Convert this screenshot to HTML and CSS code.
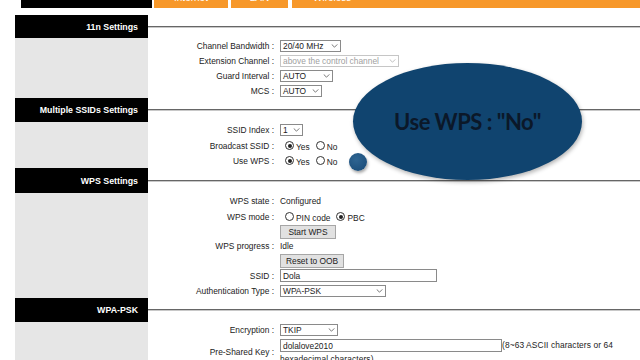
FILE: index.html
```html
<!DOCTYPE html>
<html lang="en">
<head>
  <meta charset="UTF-8">
  <title>Wireless Settings</title>
  <link rel="stylesheet" href="styles.css">
</head>
<body>
  <div class="topbar">
    <div class="top-black"></div>
    <div class="tab tab-internet"><span>Internet</span></div>
    <div class="tab tab-lan"><span>LAN</span></div>
    <div class="tab tab-wireless"><span>Wireless</span></div>
  </div>

  <div class="page">
    <!-- 11n -->
    <div class="head h-23"><div class="head-cell">11n Settings</div><div class="head-rule"></div></div>
    <div class="sec">
      <div class="side"></div>
      <div class="fields">
        <div class="row"><div class="lbl">Channel Bandwidth :</div><div class="ctl"><span class="sel w61">20/40 MHz<svg class="chev" viewBox="0 0 8 5"><path d="M0.5 0.5 L4 4 L7.5 0.5"/></svg></span></div></div>
        <div class="row"><div class="lbl">Extension Channel :</div><div class="ctl"><span class="sel w119 off">above the control channel<svg class="chev" viewBox="0 0 8 5"><path d="M0.5 0.5 L4 4 L7.5 0.5"/></svg></span></div></div>
        <div class="row"><div class="lbl">Guard Interval :</div><div class="ctl"><span class="sel w53">AUTO<svg class="chev" viewBox="0 0 8 5"><path d="M0.5 0.5 L4 4 L7.5 0.5"/></svg></span></div></div>
        <div class="row"><div class="lbl">MCS :</div><div class="ctl"><span class="sel w42">AUTO<svg class="chev" viewBox="0 0 8 5"><path d="M0.5 0.5 L4 4 L7.5 0.5"/></svg></span></div></div>
      </div>
    </div>

    <!-- Multiple SSIDs -->
    <div class="head h-24"><div class="head-cell">Multiple SSIDs Settings</div><div class="head-rule"></div></div>
    <div class="sec">
      <div class="side"></div>
      <div class="fields">
        <div class="row r16"><div class="lbl">SSID Index :</div><div class="ctl"><span class="sel w23">1<svg class="chev" viewBox="0 0 8 5"><path d="M0.5 0.5 L4 4 L7.5 0.5"/></svg></span></div></div>
        <div class="row"><div class="lbl">Broadcast SSID :</div><div class="ctl radios"><span class="radio on"></span><span class="opt">Yes</span><span class="radio"></span><span class="opt">No</span></div></div>
        <div class="row"><div class="lbl">Use WPS :</div><div class="ctl radios"><span class="radio on"></span><span class="opt">Yes</span><span class="radio"></span><span class="opt">No</span></div></div>
      </div>
    </div>

    <!-- WPS -->
    <div class="head h-25"><div class="head-cell">WPS Settings</div><div class="head-rule"></div></div>
    <div class="sec">
      <div class="side"></div>
      <div class="fields">
        <div class="row r16"><div class="lbl">WPS state :</div><div class="ctl">Configured</div></div>
        <div class="row"><div class="lbl">WPS mode :</div><div class="ctl radios"><span class="radio"></span><span class="opt">PIN code</span><span class="radio on"></span><span class="opt">PBC</span></div></div>
        <div class="row"><div class="lbl"></div><div class="ctl"><span class="btn w56">Start WPS</span></div></div>
        <div class="row r14"><div class="lbl">WPS progress :</div><div class="ctl">Idle</div></div>
        <div class="row"><div class="lbl"></div><div class="ctl"><span class="btn w64">Reset to OOB</span></div></div>
        <div class="row"><div class="lbl">SSID :</div><div class="ctl"><span class="field w157">Dola</span></div></div>
        <div class="row"><div class="lbl">Authentication Type :</div><div class="ctl"><span class="sel w106">WPA-PSK<svg class="chev" viewBox="0 0 8 5"><path d="M0.5 0.5 L4 4 L7.5 0.5"/></svg></span></div></div>
      </div>
    </div>

    <!-- WPA-PSK -->
    <div class="head h-24"><div class="head-cell">WPA-PSK</div><div class="head-rule"></div></div>
    <div class="sec">
      <div class="side"></div>
      <div class="fields">
        <div class="row r16"><div class="lbl">Encryption :</div><div class="ctl"><span class="sel w58">TKIP<svg class="chev" viewBox="0 0 8 5"><path d="M0.5 0.5 L4 4 L7.5 0.5"/></svg></span></div></div>
        <div class="row r28"><div class="lbl">Pre-Shared Key :</div><div class="ctl wrap"><span class="field w222">dolalove2010</span><span class="hint">(8~63 ASCII characters or 64 hexadecimal characters)</span></div></div>
      </div>
    </div>
  </div>

  <div class="callout">Use WPS : "No"</div>
  <div class="dot"></div>
</body>
</html>
```

FILE: styles.css
```css
body {
  margin: 0;
  width: 640px;
  height: 360px;
  overflow: hidden;
  position: relative;
  background: #fff;
  font-family: "Liberation Sans", Arial, sans-serif;
  font-size: 8.4px;
  color: #222;
}

/* top menu, cut off by the screenshot */
.topbar {
  display: flex;
  height: 8px;
  padding-left: 21px;
  overflow: hidden;
}

.top-black {
  width: 131px;
  background: #000;
}

.tab {
  background: #f7982a;
  color: #fff;
  font-size: 10px;
  line-height: 10px;
}

.tab span {
  display: block;
  margin-top: -7px;
}

.tab-internet {
  width: 74px;
  margin-left: 2px;
  text-align: center;
}

.tab-lan {
  width: 57px;
  margin-left: 3px;
  text-align: center;
}

.tab-wireless {
  flex: 1;
  margin-left: 4px;
  padding-left: 21px;
}

.page {
  padding: 7px 0 0 15px;
}

/* section headers */
.head {
  display: flex;
  align-items: center;
}

.h-23 { height: 23px; }
.h-24 { height: 24px; }
.h-25 { height: 25px; }

.head-cell {
  width: 133px;
  height: 100%;
  box-sizing: border-box;
  padding-right: 10px;
  background: #000;
  color: #fff;
  font-size: 8.8px;
  font-weight: bold;
  display: flex;
  align-items: center;
  justify-content: flex-end;
}

.head-rule {
  flex: 1;
  border-top: 1px solid #666;
  border-bottom: 1px solid #c8c8c8;
}

/* section bodies */
.sec {
  display: flex;
}

.side {
  width: 133px;
  flex-shrink: 0;
  background: #e6e6e6;
}

.fields {
  flex: 1;
}

.row {
  display: flex;
  align-items: center;
  height: 15px;
}

.r14 { height: 14px; }
.r16 { height: 16px; }
.r28 { height: 28px; }

.lbl {
  width: 126px;
  flex-shrink: 0;
  text-align: right;
  white-space: nowrap;
}

.ctl {
  margin-left: 6px;
  display: flex;
  align-items: center;
  white-space: nowrap;
}

.ctl.wrap {
  display: block;
  white-space: normal;
  width: 348px;
  line-height: 14px;
}

.hint {
  letter-spacing: 0.1px;
}

/* form controls */
.sel, .field, .btn {
  box-sizing: border-box;
  height: 12px;
  display: inline-flex;
  align-items: center;
  border: 1px solid #8a8a8a;
  background: #fff;
  padding: 0 2px;
}

.sel {
  justify-content: space-between;
}

.sel.off {
  color: #a0a0a0;
  border-color: #c6c6c6;
}

.chev {
  width: 7px;
  height: 4px;
  margin-left: 3px;
  fill: none;
  stroke: #555;
  stroke-width: 1;
}

.sel.off .chev {
  stroke: #b0b0b0;
}

.field {
  height: 13px;
  vertical-align: middle;
}

.btn {
  height: 14px;
  justify-content: center;
  background: #e1e1e1;
  border-color: #a6a6a6;
}

.w23 { width: 23px; }
.w42 { width: 42px; }
.w53 { width: 53px; }
.w56 { width: 56px; }
.w58 { width: 58px; }
.w61 { width: 61px; }
.w64 { width: 64px; }
.w106 { width: 106px; }
.w119 { width: 119px; }
.w157 { width: 157px; }
.w222 { width: 222px; }

.radios {
  margin-left: 11px;
}

.radio {
  box-sizing: border-box;
  width: 9px;
  height: 9px;
  border: 1px solid #333;
  border-radius: 50%;
  background: #fff;
  display: flex;
  align-items: center;
  justify-content: center;
}

.radio.on::after {
  content: "";
  width: 4px;
  height: 4px;
  border-radius: 50%;
  background: #222;
}

.opt {
  margin: 2px 6px 0 2px;
}

/* overlay note */
.callout {
  position: absolute;
  left: 353px;
  top: 63px;
  width: 229px;
  height: 117px;
  border-radius: 50%;
  background: #10446f;
  box-shadow: 1px 2px 4px rgba(0, 0, 0, 0.3);
  display: flex;
  align-items: center;
  justify-content: center;
  font-family: Lato, "Liberation Sans", sans-serif;
  font-weight: bold;
  font-size: 22px;
  letter-spacing: -0.5px;
  color: #0b1829;
}

.dot {
  position: absolute;
  left: 349px;
  top: 153px;
  width: 18px;
  height: 18px;
  border-radius: 50%;
  background: radial-gradient(circle at 40% 35%, #2f6592, #174874);
  box-shadow: 1px 2px 3px rgba(0, 0, 0, 0.35);
}
```
